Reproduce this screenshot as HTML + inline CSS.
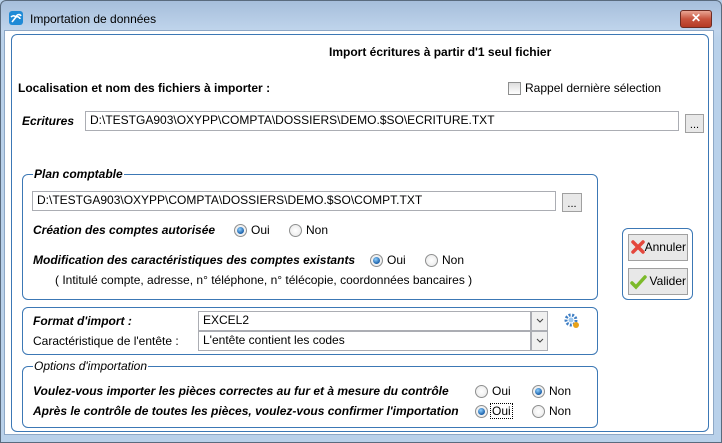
<!DOCTYPE html>
<html><head><meta charset="utf-8"><style>
*{margin:0;padding:0;box-sizing:border-box}
body{width:722px;height:443px;overflow:hidden;font-family:"Liberation Sans",Arial,sans-serif;font-size:12px;color:#000;position:relative;background:#b9d1ea}
.a{position:absolute;white-space:nowrap}
.frame{position:absolute;left:0;top:0;width:722px;height:443px;border:1px solid #5a6b7e;border-radius:6px 6px 0 0;background:linear-gradient(#a6bedb 0,#c0d5ec 30px,#b9d1ea 40px)}
.client{position:absolute;left:4px;top:30px;width:710px;height:405px;background:#fff;border:1px solid #8ea8c6}
.grp{position:absolute;border:1px solid #3c78b5;border-radius:6px}
.lg{position:absolute;background:#fff;font-style:italic;padding:0 1px;top:-8px;left:10px}
.inp{position:absolute;border:1px solid #abadb3;background:#fff;padding-left:4px;line-height:17px;height:20px}
.btn{position:absolute;border:1px solid #a0a0a0;background:#e8e8e8;text-align:center;font-size:11px}
.rd{position:absolute;width:13px;height:13px;border-radius:50%;border:1px solid #8e8f8f;background:radial-gradient(circle,#fff 0,#e6e6e6 100%)}
.rd.on::after{content:"";position:absolute;left:2px;top:2px;width:7px;height:7px;border-radius:50%;background:radial-gradient(circle at 40% 35%,#8fd0ff,#1a5fa8 70%)}
b{font-weight:bold}
.bi{font-weight:bold;font-style:italic}
.dd{position:absolute;width:17px;height:20px;border:1px solid #abadb3;background:#f0f0f0}
.dd svg{position:absolute;left:4px;top:6px}
</style></head><body>
<div class="frame"></div>
<div class="a" style="left:9px;top:11px;width:14px;height:14px;border-radius:3px;background:#1f8ad6"><svg width="14" height="14"><path d="M3 11 L7 6 M7 6 C5 4 3 5 2 6 M7 6 C8 3 11 3 12 5 M7 6 C9 5 11 7 11 8" stroke="#fff" stroke-width="1.6" fill="none"/></svg></div>
<div class="a" style="left:30px;top:12px;font-size:12px">Importation de données</div>
<div class="a" style="left:680px;top:10px;width:32px;height:18px;border:1px solid #6e2c22;border-radius:3px;background:linear-gradient(#e9a594,#c8543e 50%,#b43a24);color:#fff;font-weight:bold;text-align:center;line-height:15px;font-size:12px">✕</div>
<div class="client"></div>
<div class="grp" style="left:11px;top:34px;width:698px;height:398px"></div>

<div class="a" style="left:329px;top:45px"><b>Import écritures à partir d'1 seul fichier</b></div>
<div class="a" style="left:18px;top:81px"><b>Localisation et nom des fichiers à importer :</b></div>
<div class="a" style="left:508px;top:82px;width:13px;height:13px;border:1px solid #8e8f8f;background:linear-gradient(#ddd,#fff)"></div>
<div class="a" style="left:525px;top:81px">Rappel dernière sélection</div>
<div class="a bi" style="left:22px;top:114px">Ecritures</div>
<div class="inp" style="left:85px;top:111px;width:594px">D:\TESTGA903\OXYPP\COMPTA\DOSSIERS\DEMO.$SO\ECRITURE.TXT</div>
<div class="btn" style="left:685px;top:114px;width:19px;height:19px;line-height:20px">...</div>

<div class="grp" style="left:22px;top:174px;width:576px;height:126px"><div class="lg bi">Plan comptable</div></div>
<div class="inp" style="left:32px;top:191px;width:524px">D:\TESTGA903\OXYPP\COMPTA\DOSSIERS\DEMO.$SO\COMPT.TXT</div>
<div class="btn" style="left:562px;top:193px;width:20px;height:19px;line-height:20px">...</div>
<div class="a bi" style="left:33px;top:223px">Création des comptes autorisée</div>
<div class="rd on" style="left:234px;top:224px"></div><div class="a" style="left:251px;top:223px">Oui</div>
<div class="rd" style="left:289px;top:224px"></div><div class="a" style="left:306px;top:223px">Non</div>
<div class="a bi" style="left:33px;top:253px">Modification des caractéristiques des comptes existants</div>
<div class="rd on" style="left:370px;top:254px"></div><div class="a" style="left:387px;top:253px">Oui</div>
<div class="rd" style="left:425px;top:254px"></div><div class="a" style="left:442px;top:253px">Non</div>
<div class="a" style="left:55px;top:273px">( Intitulé compte, adresse, n° téléphone, n° télécopie, coordonnées bancaires )</div>

<div class="grp" style="left:622px;top:228px;width:71px;height:72px"></div>
<div class="btn" style="left:628px;top:234px;width:60px;height:27px;line-height:25px;font-size:12px;text-align:right;padding-right:1px">Annuler</div>
<svg class="a" style="left:630px;top:239px" width="16" height="16"><path d="M3 3 L13 13 M13 3 L3 13" stroke="#e4473c" stroke-width="3.5" stroke-linecap="round"/></svg>
<div class="btn" style="left:628px;top:268px;width:60px;height:27px;line-height:25px;font-size:12px;text-align:right;padding-right:1px">Valider</div>
<svg class="a" style="left:630px;top:273px" width="18" height="18"><path d="M2 10 L6 14 L15 4" stroke="#7cba2a" stroke-width="3.5" fill="none" stroke-linecap="round"/></svg>

<div class="grp" style="left:22px;top:307px;width:576px;height:48px"></div>
<div class="a bi" style="left:33px;top:314px">Format d'import :</div>
<div class="inp" style="left:198px;top:311px;width:333px">EXCEL2</div><div class="dd" style="left:531px;top:311px"><svg width="8" height="6"><path d="M1 1 L4 4 L7 1" stroke="#444" fill="none"/></svg></div>
<svg class="a" style="left:563px;top:312px" width="18" height="18"><circle cx="8" cy="8" r="5" fill="none" stroke="#3e7ec4" stroke-width="3" stroke-dasharray="2 1.5"/><circle cx="8" cy="8" r="2.5" fill="#9cc7ee"/><circle cx="13" cy="13" r="3" fill="#e8a21a"/></svg>
<div class="a" style="left:33px;top:334px">Caractéristique de l'entête :</div>
<div class="inp" style="left:198px;top:331px;width:333px">L'entête contient les codes</div><div class="dd" style="left:531px;top:331px"><svg width="8" height="6"><path d="M1 1 L4 4 L7 1" stroke="#444" fill="none"/></svg></div>

<div class="grp" style="left:22px;top:366px;width:576px;height:62px"><div class="lg" style="font-style:italic">Options d'importation</div></div>
<div class="a bi" style="left:33px;top:384px">Voulez-vous importer les pièces correctes au fur et à mesure du contrôle</div>
<div class="rd" style="left:475px;top:385px"></div><div class="a" style="left:492px;top:384px">Oui</div>
<div class="rd on" style="left:532px;top:385px"></div><div class="a" style="left:549px;top:384px">Non</div>
<div class="a bi" style="left:33px;top:404px">Après le contrôle de toutes les pièces, voulez-vous confirmer l'importation</div>
<div class="rd on" style="left:475px;top:405px"></div><div class="a" style="left:490px;top:403px;border:1px dotted #000;padding:0 1px">Oui</div>
<div class="rd" style="left:532px;top:405px"></div><div class="a" style="left:549px;top:404px">Non</div>
</body></html>
